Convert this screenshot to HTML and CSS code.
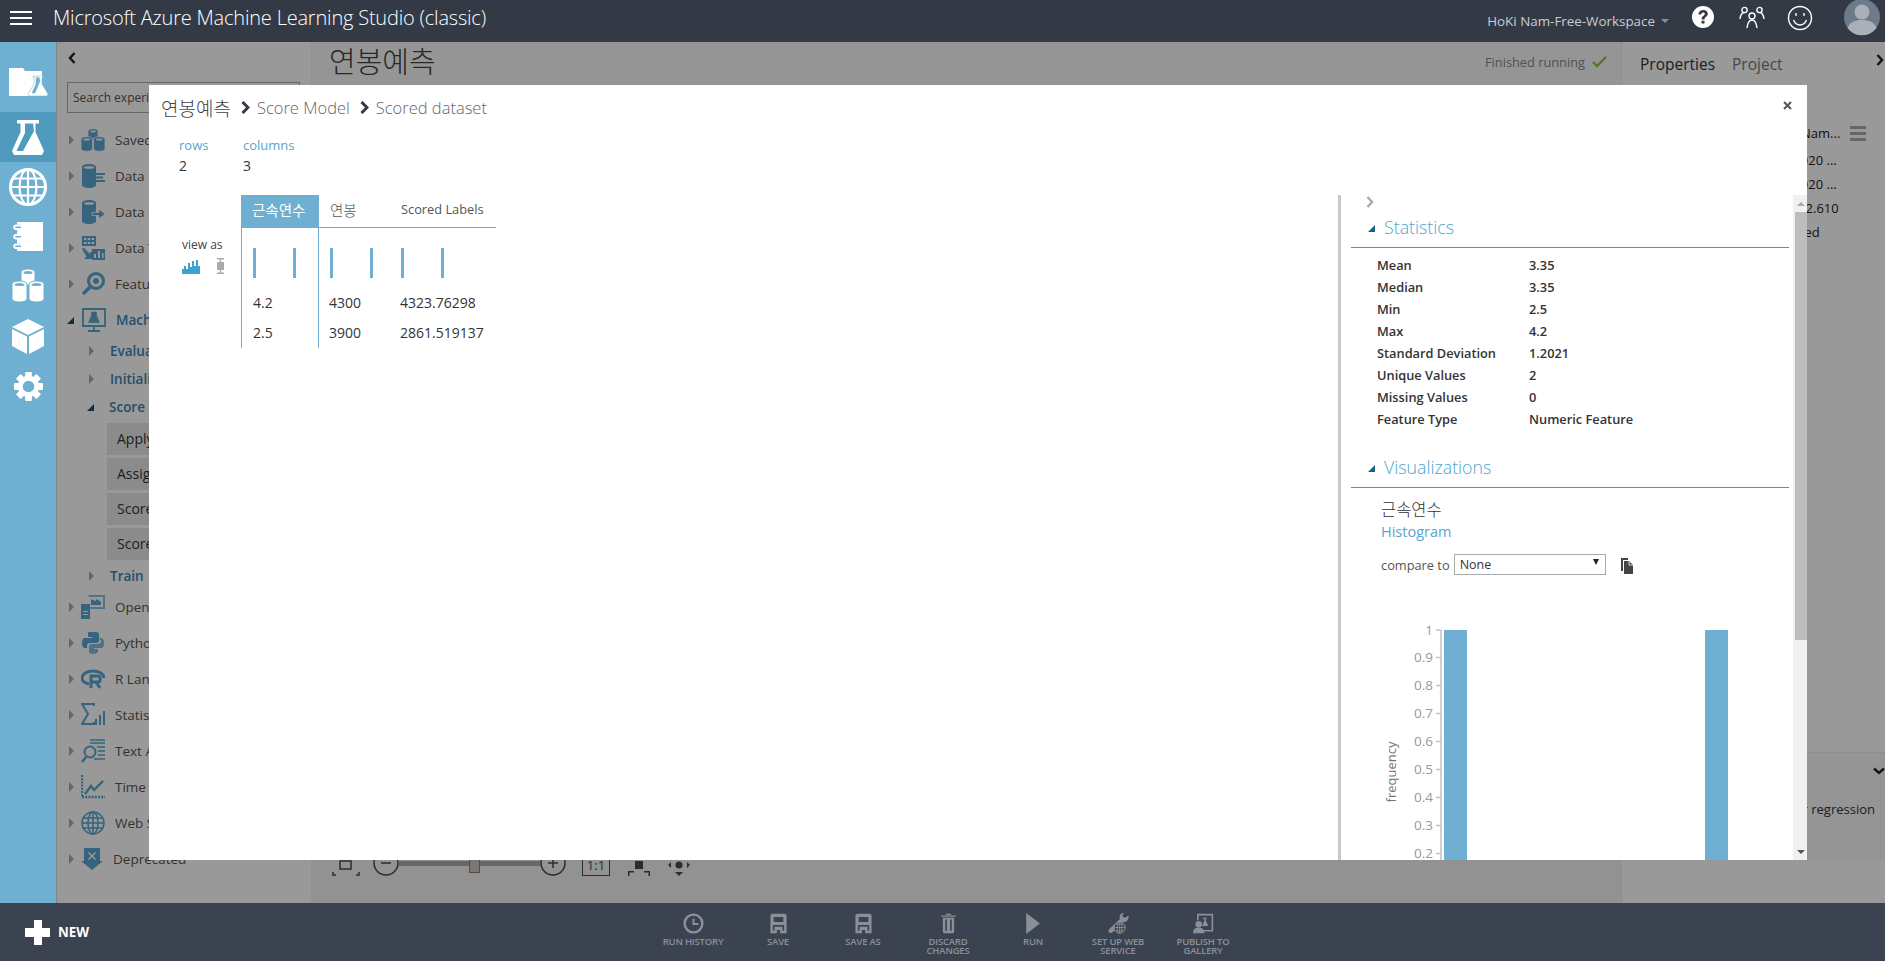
FILE: index.html
```html
<!DOCTYPE html>
<html lang="en">
<head>
<meta charset="utf-8">
<title>Microsoft Azure Machine Learning Studio (classic)</title>
<link rel="stylesheet" href="styles.css">
</head>
<body>
<div class="app">
  <header class="top">
    <div class="hamb"><i></i><i></i><i></i></div>
    <div class="brand">Microsoft Azure Machine Learning Studio (classic)</div>
    <div class="top-right">
      <span class="ws">HoKi Nam-Free-Workspace</span><span class="caret"></span>
      <svg class="ti help" width="24" height="24" viewBox="0 0 24 24"><circle cx="12" cy="12" r="11" fill="#fff"/><path d="M7.500 9.500C7.500 6.500 10 5 12.200 5c2.800 0 4.600 1.700 4.600 3.800 0 3-3.300 3-3.300 5.700h-2.900c0-3.800 3.200-3.800 3.200-5.500 0-.9-.7-1.400-1.700-1.400-1.200 0-1.700.7-1.800 1.900zM10.500 15.700h3v2.900h-3z" fill="#343a45"/></svg>
      <svg class="ti people" width="26" height="24" viewBox="0 0 26 24" fill="none" stroke="#fff" stroke-width="1.400"><circle cx="5.500" cy="4" r="2.600"/><circle cx="20.500" cy="4" r="2.600"/><circle cx="13" cy="10" r="3"/><path d="M1 13c.5-4 2-6.500 4.500-6.500M25 13c-.5-4-2-6.500-4.500-6.500M8 22c.5-4 2-8 5-8s4.500 4 5 8"/></svg>
      <svg class="ti smile" width="26" height="26" viewBox="0 0 26 26" fill="none" stroke="#fff" stroke-width="1.400"><circle cx="13" cy="13" r="11.500"/><path d="M6.500 15c1.500 3.500 4 5 6.500 5s5-1.500 6.500-5"/><path d="M9 8v3M17 8v3"/></svg>
      <svg class="avatar" width="36" height="38" viewBox="0 0 36 38"><circle cx="18" cy="18" r="18" fill="#6c7a8a"/><circle cx="18" cy="13" r="7.500" fill="#a9b0b8"/><path d="M3.500 29c2-6 8-8 14.500-8s12.500 2 14.500 8A18 18 0 0 1 3.500 29z" fill="#a9b0b8"/></svg>
    </div>
  </header>

  <div class="main">
    <nav class="rail">
      <div class="rail-item first">
        <svg width="39" height="29" viewBox="0 0 39 29" fill="#fff"><path d="M0 1h14l2 3h17v6h-5l-8 19H0z"/><path fill-rule="evenodd" d="M24 9h10v1.500h-1V17l6 10-1 2H20l-1-2 6-10v-6.500h-1zM27 10.500V17l-4 9h3l5-12-1-3.500z" stroke="#6fb0d2" stroke-width=".5"/></svg>
      </div>
      <div class="rail-item active">
        <svg width="32" height="35" viewBox="0 0 32 35" fill="#fff"><path fill-rule="evenodd" d="M5 0h22v3.500h-3.500V12L32 31l-2 4H2l-2-4 8.500-19V3.500H5zM13 3.500V13L4.500 31h6.500L22 11l-1-7.500z"/></svg>
      </div>
      <div class="rail-item">
        <svg width="38" height="38" viewBox="0 0 38 38" fill="none" stroke="#fff" stroke-width="2.200"><circle cx="19" cy="19" r="17.500" stroke-width="3"/><ellipse cx="19" cy="19" rx="8.500" ry="17.500"/><path d="M19 1v36M3.500 10.500h31M1.500 19h35M3.500 27.500h31"/></svg>
      </div>
      <div class="rail-item">
        <svg class="nudge" width="30" height="29" viewBox="0 0 30 29"><path d="M4 0h26v29H4z" fill="#fff"/><g fill="none" stroke="#6fb0d2" stroke-width="5"><path d="M4 5h4M4 14.500h4M4 24h4"/></g><g fill="none" stroke="#fff" stroke-width="2"><path d="M9 3.500H2.500a1.800 1.800 0 0 0 0 3.500H9M9 13H2.500a1.800 1.800 0 0 0 0 3.500H9M9 22.500H2.500a1.800 1.800 0 0 0 0 3.500H9"/></g></svg>
      </div>
      <div class="rail-item">
        <svg class="nudge" width="32" height="34" viewBox="0 0 32 34"><g fill="#fff" stroke="#6fb0d2" stroke-width="1"><path d="M9 3c0-4 14-4 14 0v13H9z"/><path d="M0 15c0-4 15-4 15 0v15c0 4-15 4-15 0z"/><path d="M17 15c0-4 15-4 15 0v15c0 4-15 4-15 0z"/></g><ellipse cx="16" cy="3.500" rx="4.500" ry="1.500" fill="#6fb0d2"/><ellipse cx="7.500" cy="15.500" rx="5" ry="1.600" fill="#6fb0d2"/><ellipse cx="24.500" cy="15.500" rx="5" ry="1.600" fill="#6fb0d2"/></svg>
      </div>
      <div class="rail-item">
        <svg class="nudge" width="32" height="35" viewBox="0 0 32 35" fill="#fff"><path d="M16 0l16 8-16 8L0 8z"/><path d="M0 10l15 7.500V35L0 27z"/><path d="M32 10l-15 7.500V35l15-8z"/></svg>
      </div>
      <div class="rail-item">
        <svg class="nudge" width="29" height="29" viewBox="0 0 30 30"><g fill="#fff"><circle cx="15" cy="15" r="11"/><rect x="11.500" y="0" width="7" height="30" rx="1"/><rect x="11.500" y="0" width="7" height="30" rx="1" transform="rotate(45 15 15)"/><rect x="11.500" y="0" width="7" height="30" rx="1" transform="rotate(90 15 15)"/><rect x="11.500" y="0" width="7" height="30" rx="1" transform="rotate(135 15 15)"/></g><circle cx="15" cy="15" r="6" fill="#6fb0d2"/></svg>
      </div>
    </nav>

    <aside class="palette">
      <div class="pal-back"><svg width="8" height="12" viewBox="0 0 8 12"><path d="M6.500 1L2 6l4.500 5" fill="none" stroke="#222" stroke-width="2.400"/></svg></div>
      <div class="search"><span>Search experiment items</span></div>
      <ul class="tree">
        <li class="row"><span class="ar"></span><svg class="pi" width="24" height="24" viewBox="0 0 24 24"><g fill="currentColor" stroke="#fff" stroke-width=".8"><path d="M7 3c0-3 10-3 10 0v8H7z"/><path d="M0 11c0-3 11.500-3 11.500 0v10c0 3-11.500 3-11.500 0zM12.500 11c0-3 11.500-3 11.500 0v10c0 3-11.500 3-11.500 0z"/></g><ellipse cx="12" cy="3.500" rx="3" ry="1" fill="#fff"/><ellipse cx="5.700" cy="11.500" rx="3.500" ry="1" fill="#fff"/><ellipse cx="18.300" cy="11.500" rx="3.500" ry="1" fill="#fff"/></svg>Saved Datasets</li>
        <li class="row"><span class="ar"></span><svg class="pi" width="24" height="24" viewBox="0 0 24 24" fill="currentColor"><path d="M1 3c0-4 14-4 14 0v18c0 4-14 4-14 0z"/><ellipse cx="8" cy="3.500" rx="5" ry="1.300" fill="#fff"/><path d="M15 9h9v2h-9zM15 12.500h7v2h-7zM15 16h9v2h-9z"/></svg>Data Format Conversions</li>
        <li class="row"><span class="ar"></span><svg class="pi" width="24" height="24" viewBox="0 0 24 24" fill="currentColor"><path d="M1 3c0-4 14-4 14 0v18c0 4-14 4-14 0z"/><ellipse cx="8" cy="3.500" rx="5" ry="1.300" fill="#fff"/><path d="M11 12.500h7V9l6 5-6 5v-3.500h-7z" stroke="#fff" stroke-width=".8"/></svg>Data Input and Output</li>
        <li class="row"><span class="ar"></span><svg class="pi" width="24" height="24" viewBox="0 0 24 24" fill="currentColor"><path fill-rule="evenodd" d="M1 0h14v10H1zM3 2v2h2.500V2zM6.800 2v2h2.500V2zM10.600 2v2h2.500V2zM3 6v2h2.500V6zM6.800 6v2h2.500V6zM10.600 6v2h2.500V6z"/><path fill-rule="evenodd" d="M11 13h13v11H11zM13 18v4h2v-4zM17 15v7h2v-7zM21 17v5h1.500v-5z"/><path d="M1 13l1.500-1.500 6 6L11 15v8H3l2.500-2.500z"/></svg>Data Transformation</li>
        <li class="row"><span class="ar"></span><svg class="pi" width="24" height="24" viewBox="0 0 24 24" fill="none" stroke="currentColor"><circle cx="15" cy="9" r="7.500" stroke-width="3"/><circle cx="15" cy="9" r="2.500" fill="currentColor"/><path d="M9 15l-7 7" stroke-width="3.500"/></svg>Feature Selection</li>
        <li class="row strong"><span class="ar open"></span><svg class="pi" width="24" height="24" viewBox="0 0 24 24" fill="none" stroke="currentColor" stroke-width="1.800"><path d="M1 1h22v17H1zM12 18v4M6 23h12"/><path d="M9.500 4h5v3.500l3 7h-11l3-7z" fill="currentColor" stroke-width=".6"/></svg>Machine Learning</li>
        <li class="row child strong firstchild"><span class="ar"></span>Evaluate</li>
        <li class="row child strong"><span class="ar"></span>Initialize Model</li>
        <li class="row child strong"><span class="ar open"></span>Score</li>
        <li class="tile">Apply Transformation</li>
        <li class="tile">Assign Data to Clusters</li>
        <li class="tile">Score Matchbox</li>
        <li class="tile">Score Model</li>
        <li class="row child strong train"><span class="ar"></span>Train</li>
        <li class="row"><span class="ar"></span><svg class="pi" width="24" height="24" viewBox="0 0 24 24" fill="currentColor"><path d="M7 0h17v14H9v-2h13V2H8z" opacity=".7"/><path d="M10 4l4 2 2-2 4 3v3H10z"/><path fill-rule="evenodd" d="M0 9h9v15H0zM2 16v1h5v-1zM2 19v1h5v-1z"/></svg>OpenCV Library Modules</li>
        <li class="row"><span class="ar"></span><svg class="pi" width="24" height="24" viewBox="0 0 24 24" fill="currentColor"><path d="M8 1h7c2 0 3 1 3 3v5c0 2-1 3-3 3H9c-2 0-3 1-3 3v2H4c-2 0-3-2-3-5s1-5 3-5h7V6H7V4c0-2 0-3 1-3z"/><path d="M18 7h2c2 0 3 2 3 5s-1 5-3 5h-7v1h4v2c0 2-2 3-5 3s-4-1-4-3v-4c0-2 1-3 3-3h6c2 0 3-1 3-3z" opacity=".75"/></svg>Python Language Modules</li>
        <li class="row"><span class="ar"></span><svg class="pi" width="24" height="20" viewBox="0 0 24 20" fill="none" stroke="currentColor"><path d="M8 15C3 14 1 12 1 9c0-4 5-7 11-7s11 3 11 7" stroke-width="3"/><path d="M10 19V7h7c3 0 3 6 0 6h-7M15 13l4 6" stroke-width="3"/></svg>R Language Modules</li>
        <li class="row"><span class="ar"></span><svg class="pi" width="24" height="24" viewBox="0 0 24 24" fill="none" stroke="currentColor"><path d="M13 3V1H1l6 10-6 10h12v-2" stroke-width="2"/><path d="M15 22v-6M19 22V12M23 22V8" stroke-width="2"/></svg>Statistical Functions</li>
        <li class="row"><span class="ar"></span><svg class="pi" width="24" height="24" viewBox="0 0 24 24" fill="none" stroke="currentColor"><circle cx="9" cy="13" r="5.500" stroke-width="2"/><path d="M5 18l-4 5" stroke-width="2.500"/><path d="M9 1h15M9 4h15M16 8h8M17 12h7M17 16h7M13 20h11" stroke-width="1.500"/></svg>Text Analytics</li>
        <li class="row"><span class="ar"></span><svg class="pi" width="24" height="24" viewBox="0 0 24 24" fill="none" stroke="currentColor"><path d="M1 0v22M1 22h23" stroke-width="2.400" stroke-dasharray="2 1.200"/><path d="M4 19l6-8 3 4 9-9" stroke-width="2.400"/></svg>Time Series</li>
        <li class="row"><span class="ar"></span><svg class="pi" width="24" height="24" viewBox="0 0 24 24" fill="none" stroke="currentColor" stroke-width="1.500"><circle cx="12" cy="12" r="11"/><ellipse cx="12" cy="12" rx="5" ry="11"/><path d="M12 1v22M2 7h20M1 12h22M2 17h20"/></svg>Web Service</li>
        <li class="row"><span class="ar"></span><svg class="pi" width="22" height="22" viewBox="0 0 22 22" fill="currentColor"><path fill-rule="evenodd" d="M3 0h16v13h3L11 22 0 13h3zM8 4l-1 1 3 3-3 3 1 1 3-3 3 3 1-1-3-3 3-3-1-1-3 3z"/></svg>Deprecated</li>
      </ul>
    </aside>

    <section class="canvas">
      <div class="canvas-head">
        <h1>연봉예측</h1>
        <div class="status">Finished running<svg width="15" height="12" viewBox="0 0 15 12"><path d="M1 6l4 4 9-9" fill="none" stroke="#84cc30" stroke-width="2.400"/></svg></div>
      </div>
      <div class="tools">
        <svg class="t-fit" width="28" height="18" viewBox="0 0 28 18" fill="none" stroke="#4a4a4a" stroke-width="1.500"><rect x="8" y="1" width="11" height="8"/><path d="M1 12v3h3M27 12v3h-3"/></svg>
        <svg width="26" height="26" viewBox="0 0 26 26" fill="none" stroke="#4a4a4a" stroke-width="1.500"><circle cx="13" cy="13" r="12"/><path d="M8 13h10"/></svg>
        <div class="slider"><span class="knob"></span></div>
        <svg width="26" height="26" viewBox="0 0 26 26" fill="none" stroke="#4a4a4a" stroke-width="1.500"><circle cx="13" cy="13" r="12"/><path d="M8 13h10M13 8v10"/></svg>
        <div class="oneone">1:1</div>
        <svg class="t-align" width="22" height="18" viewBox="0 0 22 18" fill="#4a4a4a"><rect x="7" y="1" width="8" height="8"/><path d="M0 11h6v1.500H1.500V16H0zM22 11h-6v1.500h4.500V16H22z"/></svg>
        <svg class="t-pan" width="22" height="18" viewBox="0 0 22 18" fill="#4a4a4a"><circle cx="11" cy="6" r="3.500"/><path d="M0 6l3-3v6zM22 6l-3-3v6zM7 13h8l-4 4z"/></svg>
      </div>
    </section>

    <aside class="props">
      <div class="prop-tabs"><span class="on">Properties</span><span>Project</span><svg class="collapse" width="8" height="12" viewBox="0 0 8 12"><path d="M1.500 1L6 6l-4.500 5" fill="none" stroke="#222" stroke-width="2.400"/></svg></div>
      <div class="prop-list">
        <div class="prop-l first">HoKi Nam...<span class="menu"><i></i><i></i><i></i></span></div>
        <div class="prop-l">5/5/2020 ...</div>
        <div class="prop-l">5/5/2020 ...</div>
        <div class="prop-l">0:00:02.610</div>
        <div class="prop-l">Finished</div>
      </div>
      <div class="prop-foot">
        <svg class="foot-ch" width="12" height="8" viewBox="0 0 12 8"><path d="M1 1.500L6 6l5-4.500" fill="none" stroke="#222" stroke-width="2.400"/></svg>
        <div class="foot-t">Linear regression</div>
      </div>
    </aside>

    <div class="dim"></div>

    <div class="modal">
      <svg class="close" width="9" height="9" viewBox="0 0 9 9"><path d="M1 1l7 7M8 1l-7 7" stroke="#555" stroke-width="2"/></svg>
      <div class="crumbs">
        <span class="ko">연봉예측</span>
        <svg width="9" height="13" viewBox="0 0 9 13"><path d="M1.500 1L7 6.500 1.500 12" fill="none" stroke="#343a45" stroke-width="3"/></svg>
        <span>Score Model</span>
        <svg width="9" height="13" viewBox="0 0 9 13"><path d="M1.500 1L7 6.500 1.500 12" fill="none" stroke="#343a45" stroke-width="3"/></svg>
        <span>Scored dataset</span>
      </div>
      <div class="counts">
        <div class="count"><div class="lbl">rows</div><div class="num">2</div></div>
        <div class="count"><div class="lbl">columns</div><div class="num">3</div></div>
      </div>
      <div class="mbody">
        <div class="left">
          <div class="viewas">
            <div>view as</div>
            <div class="va-icons">
              <svg width="20" height="16" viewBox="0 0 20 16" fill="#3ba3d0"><path d="M0 16V11h2V8h2v3h2V5h2v4h2V3h2v5h2V2h2v6h2v8z"/></svg>
              <svg width="9" height="16" viewBox="0 0 9 16" fill="#aaa"><path d="M1 0h7v1.500H5.200V4H8v8H5.200v2.500H8V16H1v-1.500h2.800V12H1V4h2.800V1.500H1z"/></svg>
            </div>
          </div>
          <div class="dtable">
            <div class="dcol c1">
              <div class="dh sel ko">근속연수</div>
              <div class="spark"><i></i><i></i></div>
              <div class="dv">4.2</div><div class="dv">2.5</div>
            </div>
            <div class="dcol c2">
              <div class="dh ko">연봉</div>
              <div class="spark"><i></i><i></i></div>
              <div class="dv">4300</div><div class="dv">3900</div>
            </div>
            <div class="dcol c3">
              <div class="dh">Scored Labels</div>
              <div class="spark"><i></i><i></i></div>
              <div class="dv">4323.76298</div><div class="dv">2861.519137</div>
            </div>
          </div>
        </div>
        <div class="pane">
          <div class="pane-in">
            <svg class="pane-ch" width="8" height="12" viewBox="0 0 8 12"><path d="M1.500 1L6 6l-4.500 5" fill="none" stroke="#aaa" stroke-width="2.400"/></svg>
            <h2 class="sec"><span class="tri"></span>Statistics</h2>
            <dl class="stats">
              <dt>Mean</dt><dd>3.35</dd>
              <dt>Median</dt><dd>3.35</dd>
              <dt>Min</dt><dd>2.5</dd>
              <dt>Max</dt><dd>4.2</dd>
              <dt>Standard Deviation</dt><dd>1.2021</dd>
              <dt>Unique Values</dt><dd>2</dd>
              <dt>Missing Values</dt><dd>0</dd>
              <dt>Feature Type</dt><dd>Numeric Feature</dd>
            </dl>
            <h2 class="sec vis"><span class="tri"></span>Visualizations</h2>
            <div class="vtitle ko">근속연수</div>
            <div class="vsub">Histogram</div>
            <div class="cmp">
              <span>compare to</span>
              <div class="sel-box">None<span class="sel-ar"></span></div>
              <svg width="12" height="16" viewBox="0 0 12 16" fill="#444"><path d="M0 0h7v2H2v11H0z"/><path d="M3 3h5l4 4v9H3z"/><path d="M8 3v4h4" fill="none" stroke="#fff" stroke-width=".8"/></svg>
            </div>
            <svg class="chart" width="420" height="260" viewBox="0 0 420 260">
              <text class="ylab" transform="translate(45 160) rotate(-90)" text-anchor="middle">frequency</text>
              <path d="M90 18h-5M90 45.500h-5M90 73.500h-5M90 101.500h-5M90 129.500h-5M90 157.500h-5M90 185.500h-5M90 213.500h-5M90 241.500h-5M90 18v240" stroke="#c2c2c2" stroke-width="1.500" fill="none"/>
              <g class="yt">
                <text x="82" y="23">1</text><text x="82" y="50">0.9</text><text x="82" y="78">0.8</text><text x="82" y="106">0.7</text><text x="82" y="134">0.6</text><text x="82" y="162">0.5</text><text x="82" y="190">0.4</text><text x="82" y="218">0.3</text><text x="82" y="246">0.2</text>
              </g>
              <rect x="93" y="18" width="23" height="240" fill="#6fb0d2"/>
              <rect x="354" y="18" width="23" height="240" fill="#6fb0d2"/>
            </svg>
          </div>
          <div class="sbar">
            <div class="sb-btn"><span class="up"></span></div>
            <div class="sb-thumb"></div>
            <div class="sb-rest"></div>
            <div class="sb-btn"><span class="down"></span></div>
          </div>
        </div>
      </div>
    </div>
  </div>

  <footer class="bar">
    <div class="new"><span class="plus"></span>NEW</div>
    <div class="cmds">
      <div class="cmd"><svg width="21" height="21" viewBox="0 0 26 26" fill="none" stroke="#8a9099" stroke-width="3"><circle cx="13" cy="13" r="11"/><path d="M13 7v6.500h6" stroke-width="2.500"/></svg><span>RUN HISTORY</span></div>
      <div class="cmd"><svg width="21" height="21" viewBox="0 0 26 26" fill="#8a9099"><path fill-rule="evenodd" d="M6 1h14c2 0 3 1 3 3v21h-8v-4h-4v4H3V4c0-2 1-3 3-3zM7 5v6h12V5zM6 15v7h2v-5h10v5h2v-7z"/></svg><span>SAVE</span></div>
      <div class="cmd"><svg width="21" height="21" viewBox="0 0 26 26" fill="#8a9099"><path fill-rule="evenodd" d="M6 1h14c2 0 3 1 3 3v21h-8v-4h-4v4H3V4c0-2 1-3 3-3zM7 5v6h12V5zM6 15v7h2v-5h10v5h2v-7z"/></svg><span>SAVE AS</span></div>
      <div class="cmd"><svg width="21" height="21" viewBox="0 0 26 26" fill="#8a9099"><path d="M4 3h18v1.500H4zM10 1h6v1.500h-6z"/><path fill-rule="evenodd" d="M6 6h14v17c0 1.500-1 2-2 2H8c-1 0-2-.5-2-2zM9 8v14h2V8zM15 8v14h2V8z"/></svg><span>DISCARD<br>CHANGES</span></div>
      <div class="cmd"><svg width="21" height="21" viewBox="0 0 26 26" fill="#8a9099"><path d="M4 0l17 13L4 26z"/></svg><span>RUN</span></div>
      <div class="cmd"><svg width="22" height="22" viewBox="0 0 26 26"><path d="M26 3l-4 3-3-1-.5-3L21 0c-3-.5-6 1-6 5 0 1 .3 1.500.5 2L2 20c-1 1-1 3 0 4s3 1 4 0L19 11c4 1 8-3 7-8z" fill="#8a9099"/><circle cx="15" cy="18" r="7" fill="#3c4350" stroke="#8a9099" stroke-width="1.200"/><path d="M15 11v14M8 18h14M10 14h10M10 22h10" stroke="#8a9099"/><ellipse cx="15" cy="18" rx="3" ry="7" fill="none" stroke="#8a9099"/></svg><span>SET UP WEB<br>SERVICE</span></div>
      <div class="cmd"><svg width="21" height="21" viewBox="0 0 26 26" fill="#8a9099"><path fill-rule="evenodd" d="M5 1h20v22H10v-2h13V3H7v6H5z"/><path d="M12 6h5v1h-1v3l3 6h-8l3-6V7h-2z"/><circle cx="7" cy="14" r="4"/><path d="M0 25c0-5 3-7 7-7s7 2 7 7z"/></svg><span>PUBLISH TO<br>GALLERY</span></div>
    </div>
  </footer>
</div>
</body>
</html>
```

FILE: styles.css
```css
* { box-sizing: border-box; }
html, body { margin: 0; padding: 0; }
body {
  width: 1885px; height: 961px; overflow: hidden;
  font-family: "Open Sans", "Noto Sans CJK KR", sans-serif;
  font-size: 13px; color: #333; background: #fff;
}
.ko { font-family: "Noto Sans CJK KR", "Open Sans", sans-serif; }
.app { display: flex; flex-direction: column; height: 961px; }

/* top bar */
.top { height: 42px; flex: none; background: #343a45; display: flex; align-items: center; color: #fff; position: relative; overflow: hidden; }
.hamb { width: 22px; margin: -6px 0 0 10px; display: flex; flex-direction: column; gap: 4px; }
.hamb i { display: block; height: 2px; background: #fff; }
.brand { margin: -8px 0 0 21px; font-size: 20px; font-weight: 300; letter-spacing: -.2px; color: #fff; }
.top-right { margin-left: auto; display: flex; align-items: center; height: 42px; }
.ws { font-size: 13.400px; color: #c9ccd0; }
.caret { width: 0; height: 0; border: 4px solid transparent; border-top-color: #8a8f97; border-bottom: 0; margin-left: 6px; }
.ti { flex: none; }
.help { margin: -8px 0 0 22px; }
.people { margin: -6px 0 0 24px; }
.smile { margin: -6px 0 0 22px; }
.avatar { margin: -6px 5px 0 31px; flex: none; }

/* main */
.main { flex: 1; display: flex; position: relative; min-height: 0; overflow: hidden; }
.rail { width: 56px; flex: none; background: #6fb0d2; padding-top: 20px; }
.rail-item { height: 50px; display: flex; align-items: center; justify-content: center; }
.rail-item.first svg { margin-top: -12px; }
.rail-item.active { background: #4f9abd; }
.rail-item .nudge { margin-top: -2px; }

.palette { width: 255px; flex: none; background: #fff; border-left: 1px solid #ddd; padding-left: 10px; color: #555; }
.pal-back { height: 40px; padding: 10px 0 0 1px; display: flex; }
.search { width: 233px; height: 31px; border: 1px solid #aaa; font-size: 12px; line-height: 29px; padding-left: 5px; color: #555; }
.search span { white-space: nowrap; }
.tree { list-style: none; margin: 9px 0 0; padding: 0; }
.row { height: 36px; display: flex; align-items: center; font-size: 13.500px; color: #555; white-space: nowrap; }
.ar { width: 0; height: 0; border-left: 5px solid #aaa; border-top: 5px solid transparent; border-bottom: 5px solid transparent; margin-left: 2px; margin-right: 7px; flex: none; }
.ar.open { border: 0; border-right: 7px solid #244f6b; border-top: 7px solid transparent; margin-left: 0; margin-right: 8px; }
.pi { color: #5aa5d2; margin-right: 10px; flex: none; }
.row.strong { color: #3c84b2; font-weight: 600; }
.child { height: 28px; padding-left: 20px; }
.firstchild { margin-top: -1px; }
.train { height: 27px; margin-top: -1px; }
.child .ar { margin-right: 16px; }
.child .ar.open { margin-right: 15px; }
.tile { height: 32px; margin: 2px 0 3px 40px; background: #e8e8e8; font-size: 14px; line-height: 32px; padding-left: 10px; color: #333; white-space: nowrap; }

.canvas { flex: 1; background: #f9f9f9; border-right: 1px solid #f0f0f0; display: flex; flex-direction: column; min-width: 0; border-left: 1px solid #f4f4f4; }
.canvas-head { display: flex; padding: 0 14px 0 17px; height: 42px; }
.canvas-head h1 { margin: 0; font-family: "Noto Sans CJK KR", sans-serif; font-size: 29px; font-weight: 300; line-height: 36px; color: #444; }
.status { margin-left: auto; display: flex; align-items: center; gap: 7px; font-size: 12.800px; color: #888; height: 40px; }
.tools { margin-top: auto; height: 60px; display: flex; align-items: flex-start; padding: 7px 0 0 20px; background: #f3f3f3; }
.slider { width: 141px; height: 5px; background: #b5aca6; margin: 11px 0 0; position: relative; }
.knob { position: absolute; left: 70px; top: -6px; width: 11px; height: 18px; background: #cfc6bf; border: 1px solid #8a817b; }
.t-fit { margin: 10px 13px 0 0; }
.oneone { width: 28px; height: 28px; margin: -2px 18px 0 16px; border: 1.500px solid #4a4a4a; font-size: 13px; text-align: center; line-height: 32px; color: #4a4a4a; }
.t-align { margin: 10px 18px 0 0; }
.t-pan { margin: 9px 0 0 0; }

.props { width: 263px; flex: none; background: #fff; position: relative; display: flex; flex-direction: column; }
.prop-tabs { display: flex; gap: 17px; padding: 11px 0 0 18px; font-size: 15.500px; height: 41px; color: #777; position: relative; }
.prop-tabs .on { color: #333; }
.collapse { position: absolute; right: 1px; top: 12px; }
.prop-list { padding: 35px 0 0 147px; font-size: 13px; color: #222; }
.prop-l { height: 24px; line-height: 24px; white-space: nowrap; }
.prop-l.first { height: 30px; line-height: 30px; display: flex; align-items: center; gap: 10px; }
.menu { display: flex; flex-direction: column; gap: 3px; width: 16px; flex: none; }
.menu i { height: 3px; background: #aaa; display: block; }
.prop-foot { margin-top: auto; height: 109px; margin-bottom: 42px; border-top: 1px solid #ececec; background: #f9f9f9; position: relative; padding: 47px 10px 0 0; text-align: right; font-size: 13px; color: #333; }
.foot-ch { position: absolute; right: 0; top: 14px; }
.foot-t { white-space: nowrap; }

.dim { position: absolute; left: 56px; right: 0; top: 0; bottom: 0; background: rgba(0, 0, 0, .4); }

/* modal */
.modal { position: absolute; left: 149px; top: 43px; width: 1658px; height: 775px; background: #fff; display: flex; flex-direction: column; overflow: hidden; }
.close { position: absolute; right: 15px; top: 16px; }
.crumbs { height: 44px; display: flex; align-items: center; padding-left: 12px; font-size: 16.500px; font-weight: 300; color: #666; flex: none; }
.crumbs svg { margin: 0 7px 0 10px; flex: none; }
.crumbs .ko { font-size: 19px; font-weight: 300; color: #444; }
.counts { display: flex; padding-left: 30px; height: 66px; flex: none; }
.count { width: 64px; padding-top: 6px; }
.lbl { color: #5ba4cf; font-size: 13px; line-height: 20px; }
.num { font-size: 14px; line-height: 22px; color: #333; }
.mbody { flex: 1; display: flex; min-height: 0; }
.left { flex: 1; display: flex; padding-left: 33px; min-width: 0; }
.viewas { width: 59px; padding-top: 41px; font-size: 12px; color: #444; line-height: 18px; }
.va-icons { display: flex; gap: 14px; margin-top: 4px; }
.dtable { display: flex; align-items: flex-start; height: 153px; }
.dcol { display: flex; flex-direction: column; }
.c1 { width: 78px; border-left: 1px solid #6fb0d2; border-right: 1px solid #6fb0d2; height: 153px; }
.c2 { width: 71px; }
.c3 { width: 106px; }
.dh { height: 33px; line-height: 29px; border-bottom: 1px solid #6fb0d2; padding-left: 11px; font-size: 12.800px; color: #555; white-space: nowrap; }
.dh.ko { font-size: 14.500px; font-weight: 300; }
.c1 .dh { padding-left: 11px; margin: 0 -1px; }
.dh.sel { background: #6fb0d2; color: #fff; border-bottom: 0; font-weight: 400; }
.spark { height: 60px; padding: 20px 0 0 11px; display: flex; gap: 37px; }
.spark i { width: 3px; height: 30px; background: #6fb0d2; display: block; }
.dv { height: 30px; line-height: 30px; padding-left: 10px; font-size: 14px; color: #333; white-space: nowrap; }
.c1 .dv { padding-left: 11px; }

.pane { width: 469px; flex: none; border-left: 3px solid #c8c8c8; display: flex; overflow: hidden; height: 665px; }
.pane-in { width: 450px; padding-left: 10px; flex: none; overflow: hidden; }
.pane-ch { display: block; margin: 1px 0 0 15px; height: 12px; }
.sec { margin: 7px 0 0; height: 33px; padding: 0 0 8px 17px; border-bottom: 1px solid #2ea3c9; display: flex; align-items: center; font-size: 17.800px; font-weight: 300; color: #4ea5d0; width: 438px; }
.tri { width: 0; height: 0; border-right: 7px solid #1c6288; border-top: 7px solid transparent; margin-right: 9px; margin-top: 3px; }
.stats { display: grid; grid-template-columns: 152px 1fr; margin: 6px 0 0 26px; font-size: 12.800px; }
.stats dt { font-weight: 600; line-height: 22px; color: #333; white-space: nowrap; }
.stats dd { margin: 0; font-weight: 600; line-height: 22px; color: #333; }
.sec.vis { margin-top: 25px; }
.vtitle { margin: 9px 0 0 30px; font-size: 16.500px; font-weight: 300; line-height: 24px; color: #333; }
.vsub { margin-left: 30px; font-size: 14.500px; line-height: 22px; color: #5ba4cf; }
.cmp { margin: 11px 0 0 30px; display: flex; align-items: center; font-size: 12.800px; color: #555; height: 21px; }
.sel-box { width: 152px; height: 21px; margin-left: 4px; border: 1px solid #aaa; padding-left: 5px; line-height: 19px; font-size: 12.500px; color: #333; position: relative; }
.sel-ar { position: absolute; right: 6px; top: 4px; border: 3.500px solid transparent; border-top: 6px solid #222; border-bottom: 0; }
.cmp svg { margin: 3px 0 0 15px; }
.chart { display: block; margin: 37px 0 0 0; }
.ylab { font-family: "Open Sans", sans-serif; font-size: 13px; fill: #777; }
.yt text { font-family: "Open Sans", sans-serif; font-size: 13.500px; fill: #999; text-anchor: end; }
.sbar { width: 16px; margin-left: 2px; flex: none; background: #f0f0f0; display: flex; flex-direction: column; }
.sb-btn { height: 17px; flex: none; display: flex; align-items: center; justify-content: center; }
.up { border: 4px solid transparent; border-bottom: 4px solid #aaa; border-top: 0; }
.down { border: 4px solid transparent; border-top: 4px solid #555; border-bottom: 0; }
.sb-thumb { height: 428px; background: #bdbdbd; margin: 0 1px 0 2px; flex: none; }
.sb-rest { flex: 1; }

/* bottom bar */
.bar { height: 58px; flex: none; background: #3c4350; display: flex; position: relative; }
.new { position: absolute; left: 25px; top: 17px; display: flex; align-items: center; gap: 8px; color: #fff; font-weight: 700; font-size: 13.300px; height: 24px; }
.plus { width: 25px; height: 25px; display: block; background:
  linear-gradient(#fff, #fff) center / 25px 9px no-repeat,
  linear-gradient(#fff, #fff) center / 8px 25px no-repeat; }
.cmds { margin: 0 auto; display: flex; padding-left: 11px; }
.cmd { width: 85px; height: 58px; display: flex; flex-direction: column; align-items: center; padding-top: 10px; color: #8a9099; text-align: center; font-size: 9.500px; line-height: 9px; font-weight: 600; letter-spacing: -.2px; }
.cmd svg { flex: none; height: 21px; margin-bottom: 3px; }
```
